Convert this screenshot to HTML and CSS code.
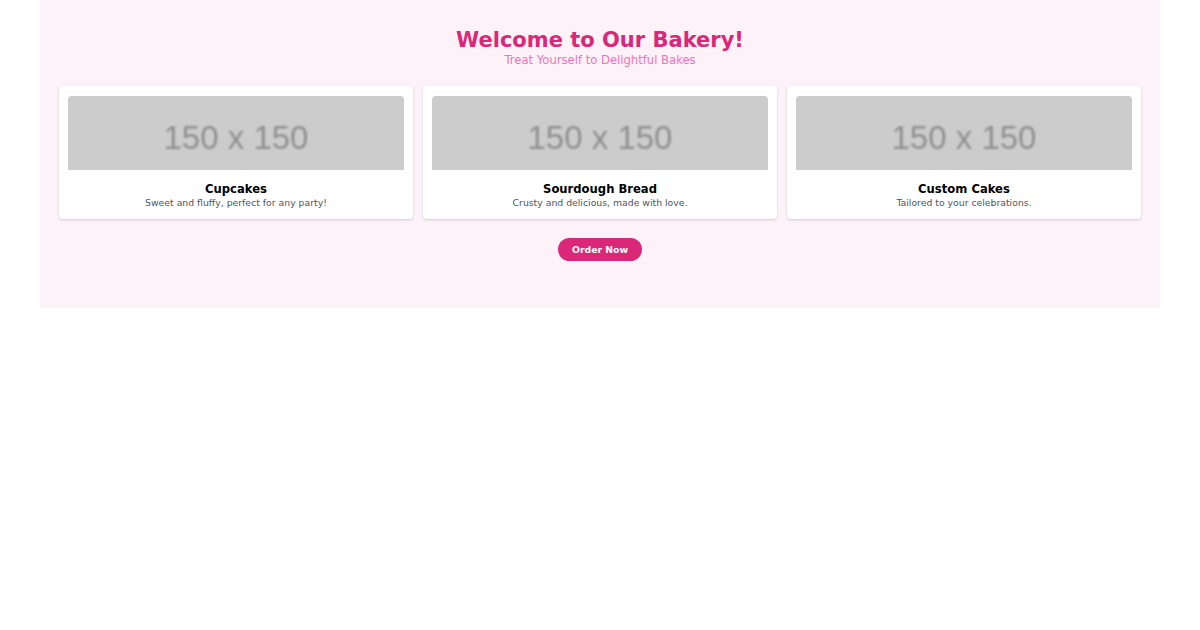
FILE: index.html
```html
<!DOCTYPE html>
<html>
<head>
<meta charset="utf-8">
<link rel="stylesheet" href="styles.css">
</head>
<body>
<main class="page">
  <header class="hero">
    <h1 class="title">Welcome to Our Bakery!</h1>
    <p class="subtitle">Treat Yourself to Delightful Bakes</p>
  </header>
  <section class="cards">
    <article class="card">
      <div class="thumb"><span>150 x 150</span></div>
      <h2 class="card-title">Cupcakes</h2>
      <p class="card-text">Sweet and fluffy, perfect for any party!</p>
    </article>
    <article class="card">
      <div class="thumb"><span>150 x 150</span></div>
      <h2 class="card-title">Sourdough Bread</h2>
      <p class="card-text">Crusty and delicious, made with love.</p>
    </article>
    <article class="card">
      <div class="thumb"><span>150 x 150</span></div>
      <h2 class="card-title">Custom Cakes</h2>
      <p class="card-text">Tailored to your celebrations.</p>
    </article>
  </section>
  <div class="actions">
    <button class="btn">Order Now</button>
  </div>
</main>
</body>
</html>
```
FILE: styles.css
```css
* { box-sizing: border-box; }
html, body { margin: 0; padding: 0; background: #ffffff; }
body { font-family: "DejaVu Sans", sans-serif; }

.page {
  width: 1120px;
  margin: 0 auto;
  background: #fdf2f8;
  padding: 26px 19px 47px;
}

.hero { text-align: center; }
.title {
  margin: 0;
  font-size: 21px;
  line-height: 28px;
  font-weight: bold;
  color: #db2777;
}
.subtitle {
  margin: -2px 0 0;
  font-size: 11.6px;
  line-height: 16px;
  color: #f472b6;
}

.cards {
  margin-top: 18px;
  display: grid;
  grid-template-columns: repeat(3, 1fr);
  gap: 10px;
}
.card {
  background: #ffffff;
  border-radius: 4px;
  box-shadow: 0 1px 3px rgba(0,0,0,0.12), 0 1px 2px rgba(0,0,0,0.06);
  padding: 10px 9px 10px;
  text-align: center;
}
.thumb {
  height: 74px;
  background: #cccccc;
  border-radius: 4px 4px 0 0;
  display: flex;
  align-items: center;
  justify-content: center;
  overflow: hidden;
}
.thumb span {
  font-family: "Liberation Sans", Arial, sans-serif;
  font-size: 33px;
  color: #8f8f8f;
  filter: blur(0.8px);
  margin-top: 10px;
}
.card-title {
  margin: 11px 0 0;
  font-size: 11.6px;
  line-height: 16px;
  font-weight: bold;
  color: #000000;
}
.card-text {
  margin: 0;
  font-size: 9.3px;
  line-height: 12px;
  color: #4b5563;
}

.actions {
  margin-top: 19px;
  display: flex;
  justify-content: center;
}
.btn {
  font-family: "DejaVu Sans", sans-serif;
  background: #db2777;
  color: #ffffff;
  border: none;
  border-radius: 999px;
  width: 84px;
  height: 23px;
  padding: 0;
  font-size: 9.3px;
  font-weight: bold;
}
```
